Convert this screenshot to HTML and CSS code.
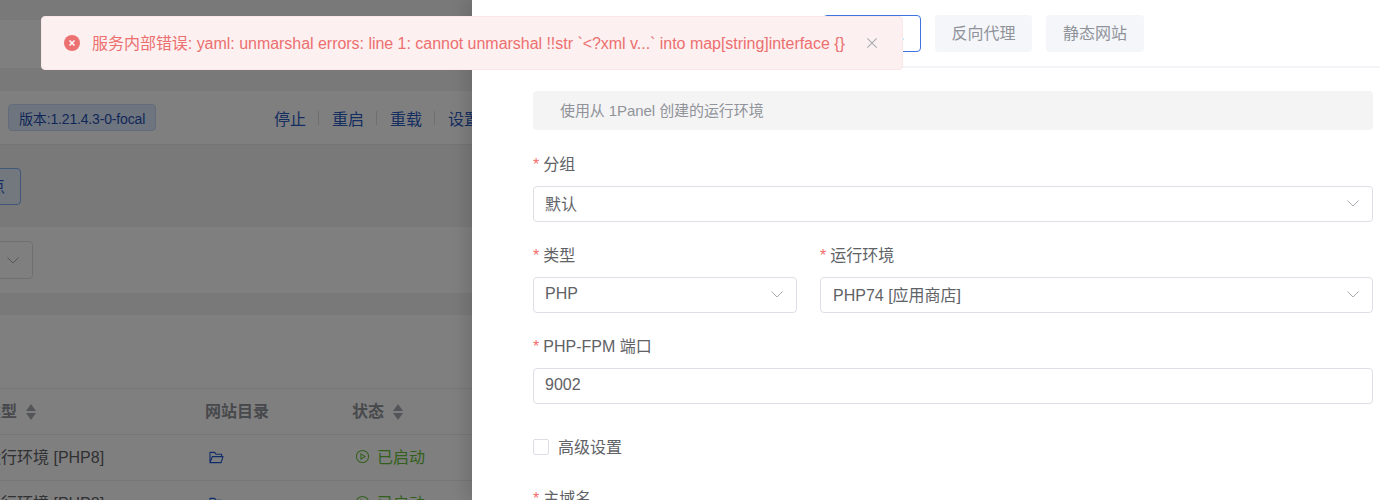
FILE: index.html
```html
<!DOCTYPE html>
<html lang="zh-CN">
<head>
<meta charset="utf-8">
<title>创建网站</title>
<link rel="stylesheet" href="styles.css">
</head>
<body>
<main class="page">
  <div class="topbar"></div>
  <section class="card status-card">
    <span class="tag">版本:1.21.4.3-0-focal</span>
    <nav class="actions">
      <a>停止</a><i></i><a>重启</a><i></i><a>重载</a><i></i><a>设置</a>
    </nav>
  </section>
  <section class="toolbar">
    <button class="outline-btn">创建站点</button>
  </section>
  <section class="card filter-card">
    <div class="ghost-select">
      <svg class="chev" viewBox="0 0 14 14"><path d="M1.5 4.5 7 10l5.5-5.5"/></svg>
    </div>
  </section>
  <section class="card table-card">
    <div class="row head">
      <span class="c1">类型 <b class="sort"></b></span>
      <span class="c2">网站目录</span>
      <span class="c3">状态 <b class="sort"></b></span>
    </div>
    <div class="row">
      <span class="c1">运行环境 [PHP8]</span>
      <span class="c2"><svg class="folder" viewBox="0 0 16 14"><path d="M1 12.5V1.500h5l1.500 2h6v2.500M1 12.500h12l2-6.500H3.500L1 12.500z"/></svg></span>
      <span class="c3 ok"><svg class="play" viewBox="0 0 16 16"><circle cx="8" cy="8" r="6.500"/><path d="M6.300 5.200 10.800 8l-4.500 2.800z"/></svg>已启动</span>
    </div>
    <div class="row">
      <span class="c1">运行环境 [PHP8]</span>
      <span class="c2"><svg class="folder" viewBox="0 0 16 14"><path d="M1 12.500V1.500h5l1.500 2h6v2.500M1 12.500h12l2-6.500H3.500L1 12.500z"/></svg></span>
      <span class="c3 ok"><svg class="play" viewBox="0 0 16 16"><circle cx="8" cy="8" r="6.500"/><path d="M6.300 5.200 10.800 8l-4.500 2.800z"/></svg>已启动</span>
    </div>
  </section>
</main>

<div class="overlay"></div>

<aside class="drawer">
  <div class="tabs">
    <button class="tab active">运行环境</button>
    <button class="tab">反向代理</button>
    <button class="tab">静态网站</button>
  </div>
  <form class="form">
    <div class="notice">使用从 1Panel 创建的运行环境</div>
    <div class="field first">
      <label class="label req">分组</label>
      <div class="control">默认<svg class="chev" viewBox="0 0 14 14"><path d="M1.500 4.500 7 10l5.500-5.500"/></svg></div>
    </div>
    <div class="field two">
      <div class="col-type">
        <label class="label req">类型</label>
        <div class="control">PHP<svg class="chev" viewBox="0 0 14 14"><path d="M1.500 4.500 7 10l5.500-5.500"/></svg></div>
      </div>
      <div class="col-env">
        <label class="label req">运行环境</label>
        <div class="control">PHP74 [应用商店]<svg class="chev" viewBox="0 0 14 14"><path d="M1.500 4.500 7 10l5.500-5.500"/></svg></div>
      </div>
    </div>
    <div class="field">
      <label class="label req">PHP-FPM 端口</label>
      <div class="control">9002</div>
    </div>
    <label class="check"><span class="box"></span><span class="check-text">高级设置</span></label>
    <div class="field last">
      <label class="label req">主域名</label>
    </div>
  </form>
</aside>

<div class="message">
  <svg class="msg-icon" viewBox="0 0 16 16"><circle cx="8" cy="8" r="8"/><path d="M5.500 5.500l5 5m0-5l-5 5"/></svg>
  <p class="msg-text">服务内部错误: yaml: unmarshal errors: line 1: cannot unmarshal !!str `&lt;?xml v...` into map[string]interface {}</p>
  <svg class="msg-close" viewBox="0 0 14 14"><path d="M1.500 1.500l11 11m0-11l-11 11"/></svg>
</div>
</body>
</html>
```

FILE: styles.css
```css
* { box-sizing: border-box; }
html, body { margin: 0; height: 500px; overflow: hidden; }
body {
  position: relative;
  width: 1380px;
  background: #f2f3f4;
  font-family: "Liberation Sans", "Noto Sans CJK SC", sans-serif;
  font-size: 16px;
  color: #606266;
}

/* page behind the drawer */
.page { margin-left: -60px; width: 532px; height: 500px; overflow: hidden; }
.topbar { height: 48px; margin-top: 20px; margin-bottom: 23px; background: #fff; }
.card { background: #fff; }
.status-card {
  display: flex;
  align-items: center;
  height: 54px;
  padding-left: 68px;
  border-bottom: 1px solid #e8e8ee;
}
.tag {
  display: flex;
  align-items: center;
  flex: none;
  width: 148px;
  height: 27px;
  padding-left: 10px;
  font-size: 14px;
  letter-spacing: -.16px;
  white-space: nowrap;
  color: #1f4fb0;
  background: #dcebff;
  border: 1px solid #c6d8f6;
  border-radius: 4px;
}
.actions { display: flex; align-items: center; flex: none; margin-left: 118px; color: #2b5cc4; white-space: nowrap; }
.actions a { width: 32px; }
.actions i { width: 1px; height: 14px; margin: 0 13px 0 12px; background: #dcdfe6; }
.toolbar { height: 82px; padding-top: 23px; }
.outline-btn {
  display: block;
  width: 81px;
  height: 37px;
  margin: 0;
  padding: 0 16px 3px 0;
  font: 16px "Liberation Sans", "Noto Sans CJK SC", sans-serif;
  white-space: nowrap;
  color: #2b5cc4;
  background: #e6effd;
  border: 1px solid #80aef5;
  border-radius: 4px;
  text-align: right;
  overflow: hidden;
}
.filter-card { height: 66px; padding-top: 14px; }
.ghost-select {
  display: flex;
  align-items: center;
  justify-content: flex-end;
  width: 93px;
  height: 38px;
  padding-right: 12px;
  background: #fff;
  border: 1px solid #dcdfe6;
  border-radius: 4px;
}
.table-card { margin-top: 22px; height: 185px; padding-top: 73px; }
.row {
  display: flex;
  align-items: center;
  height: 46px;
  padding: 0 0 3px 45px;
  border-top: 1px solid #ebeef5;
  white-space: nowrap;
}
.head { font-weight: 700; color: #909399; }
.c1 { width: 220px; flex: none; }
.c2 { width: 147px; flex: none; }
.c3 { width: 120px; flex: none; }
.sort {
  display: inline-block;
  position: relative;
  vertical-align: -3px;
  width: 10px;
  height: 16px;
  margin-left: 5px;
}
.sort::before, .sort::after {
  content: "";
  position: absolute;
  left: 0;
  border-left: 5px solid transparent;
  border-right: 5px solid transparent;
}
.sort::before { top: 0; border-bottom: 7px solid #a8abb2; }
.sort::after { bottom: 0; border-top: 7px solid #a8abb2; }
.folder { display: block; width: 15px; height: 13px; margin: 3px 0 0 4px; fill: none; stroke: #1f5ad6; stroke-width: 1.200; stroke-linejoin: round; }
.ok { display: flex; align-items: center; color: #67c23a; padding-left: 3px; }
.play { width: 15px; height: 15px; margin-right: 7px; fill: none; stroke: #67c23a; stroke-width: 1.100; }

/* dim layer */
.overlay { position: absolute; inset: 0; background: rgba(0, 0, 0, .5); }

/* drawer */
.drawer {
  position: absolute;
  top: 0;
  left: 472px;
  right: 0;
  bottom: 0;
  background: #fff;
  box-shadow: -6px 0 16px rgba(0, 0, 0, .12);
  overflow: hidden;
}
.tabs {
  display: flex;
  gap: 14px;
  height: 68px;
  padding: 15px 0 0 351px;
  border-bottom: 2px solid #f3f4f7;
}
.tab {
  width: 97.600px;
  height: 37px;
  padding: 0 0 3px;
  font: 16px "Liberation Sans", "Noto Sans CJK SC", sans-serif;
  color: #909399;
  background: #f4f6fa;
  border: 0;
  border-radius: 4px;
}
.tab.active { background: #fff; color: #005eeb; border: 1px solid #3f74e0; }
.form { padding: 23px 7px 0 61px; }
.notice {
  display: flex;
  align-items: center;
  height: 39px;
  padding: 0 0 3px 27px;
  font-size: 15px;
  letter-spacing: -.08px;
  color: #909399;
  background: #f4f4f5;
  border-radius: 4px;
}
.field { margin-top: 23px; }
.field.first { margin-top: 24px; }
.field.last { margin-top: 33px; }
.field.two { display: flex; gap: 23px; }
.col-type { width: 264px; }
.col-env { flex: 1; }
.label { display: block; height: 32px; line-height: 22px; color: #606266; }
.req::before { content: "*"; margin-right: 4px; color: #f56c6c; }
.control {
  display: flex;
  align-items: center;
  justify-content: space-between;
  height: 36px;
  padding: 0 12px 2px 11px;
  color: #606266;
  background: #fff;
  border: 1px solid #dcdfe6;
  border-radius: 4px;
}
.col-env .control { padding-left: 12px; }
.chev { width: 14px; height: 14px; fill: none; stroke: #a8abb2; stroke-width: 1; }
.check { display: flex; align-items: center; height: 16px; margin-top: 35px; color: #606266; }
.check-text { margin-bottom: 2px; }
.box { width: 16px; height: 16px; margin-right: 9px; background: #fff; border: 1px solid #dcdfe6; border-radius: 2px; }

/* toast */
.message {
  position: absolute;
  top: 16px;
  left: 41px;
  display: flex;
  align-items: center;
  width: 862px;
  height: 54px;
  padding: 0 0 0 22px;
  background: #fcf0f0;
  border: 1px solid #fbe7e7;
  border-radius: 4px;
}
.msg-icon { flex: none; width: 16px; height: 16px; margin-right: 12px; fill: #ec7272; stroke: #fff; stroke-width: 1.500; }
.msg-icon circle { stroke: none; }
.msg-text { margin: 0 0 2px; font-size: 16px; letter-spacing: -.03px; color: #ec6f6f; white-space: nowrap; }
.msg-close { flex: none; width: 12px; height: 12px; margin-left: 21px; fill: none; stroke: #a8abb2; stroke-width: 1.200; }
```
